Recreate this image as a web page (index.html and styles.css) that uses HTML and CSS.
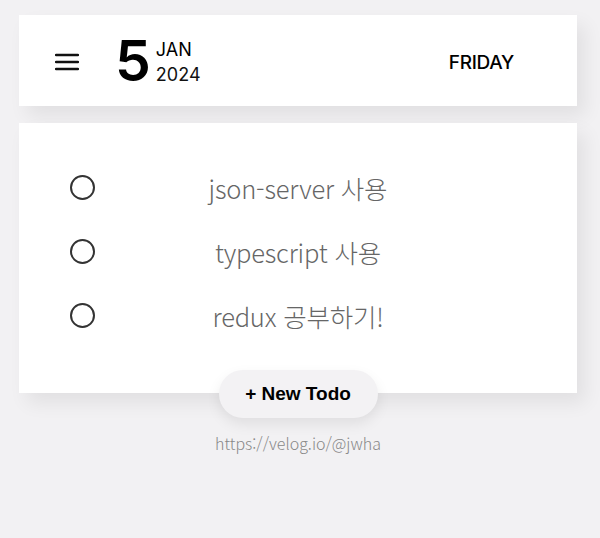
FILE: index.html
```html
<!DOCTYPE html>
<html lang="ko">
<head>
<meta charset="utf-8">
<link rel="stylesheet" href="styles.css">
</head>
<body>
<div class="app">
  <header class="header card">
    <div class="left">
      <svg class="menu" width="24" height="18" viewBox="0 0 24 18"><path d="M1 2h22M1 9h22M1 16h22" stroke="#111" stroke-width="2.4" stroke-linecap="round"/></svg>
      <div class="date">
        <span class="day">5</span>
        <div class="my">
          <span class="month">JAN</span>
          <span class="year">2024</span>
        </div>
      </div>
    </div>
    <div class="weekday">FRIDAY</div>
  </header>
  <main class="list card">
    <div class="item"><span class="check"></span><span class="text">json-server 사용</span></div>
    <div class="item"><span class="check"></span><span class="text">typescript 사용</span></div>
    <div class="item"><span class="check"></span><span class="text">redux 공부하기!</span></div>
  </main>
  <button class="new">+ New Todo</button>
  <footer class="foot">https://velog.io/@jwha</footer>
</div>
</body>
</html>
```
FILE: styles.css
```css
* { box-sizing: border-box; }
html, body { margin: 0; padding: 0; background: #f2f1f3; }
body { font-family: "Inter", sans-serif; }
.app { width: 558px; margin-left: 19px; padding-top: 15px; display: flex; flex-direction: column; align-items: center; }
.card { width: 100%; background: #fff; box-shadow: 8px 10px 18px rgba(0,0,0,0.07); }
.header { height: 91px; display: flex; align-items: center; justify-content: space-between; padding: 0 63px 0 36px; }
.left { display: flex; align-items: center; gap: 36px; }
.menu { display: block; margin-top: 2px; }
.date { display: flex; align-items: center; gap: 7px; }
.day { font-family: "Inter", sans-serif; font-size: 57px; font-weight: 600; line-height: 1; color: #000; letter-spacing: -2px; }
.my { display: flex; flex-direction: column; line-height: 1; margin-top: 3px; }
.month { font-size: 18px; color: #000; margin-bottom: 7px; }
.year { font-size: 18px; color: #111; }
.weekday { font-size: 19px; font-weight: 500; color: #000; letter-spacing: -0.3px; margin-top: 4px; }
.list { margin-top: 17px; height: 270px; padding: 32px 51px 46px; }
.item { height: 64px; display: grid; grid-template-columns: 24px 1fr 24px; align-items: center; }
.check { width: 25px; height: 25px; border: 2.5px solid #333; border-radius: 50%; }
.text { text-align: center; font-family: "Noto Sans CJK KR", sans-serif; font-weight: 300; font-size: 25.5px; color: #666; letter-spacing: -0.2px; }
.new { margin-top: -23px; width: 159px; height: 48px; border: none; border-radius: 24px; background: #f3f2f4; box-shadow: 0 6px 14px rgba(0,0,0,0.08); font-family: "Liberation Sans", sans-serif; font-weight: 700; font-size: 19px; color: #000; }
.foot { margin-top: 13px; font-family: "Noto Sans CJK KR", sans-serif; font-weight: 300; font-size: 16px; color: #888; }
```
